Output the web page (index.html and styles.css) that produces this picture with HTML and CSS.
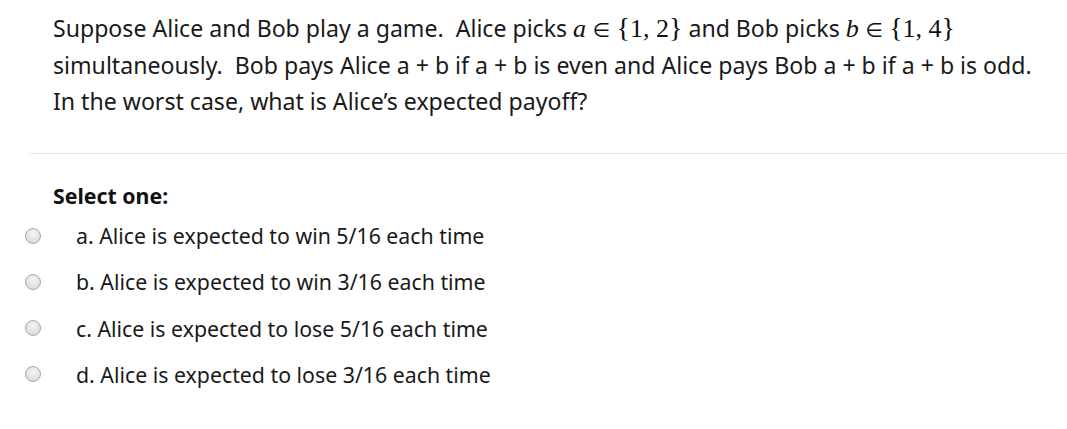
FILE: index.html
```html
<!DOCTYPE html>
<html>
<head>
<meta charset="utf-8">
<link rel="stylesheet" href="styles.css">
</head>
<body>
<div class="question">
  <p class="qtext">Suppose Alice and Bob play a game.&nbsp; Alice picks <span class="math"><i class="mi">a</i> <span class="rel">∈</span> <span class="br">{</span>1, 2<span class="br">}</span></span> and Bob picks <span class="math"><i class="mi">b</i> <span class="rel">∈</span> <span class="br">{</span>1, 4<span class="br">}</span></span><br>simultaneously.&nbsp; Bob pays Alice a + b if a + b is even and Alice pays Bob a + b if a + b is odd.<br>In the worst case, what is Alice’s expected payoff?</p>
</div>
<hr class="divider">
<div class="answers">
  <div class="prompt">Select one:</div>
  <ul class="options">
    <li class="option"><span class="radio"></span><span class="label">a. Alice is expected to win 5/16 each time</span></li>
    <li class="option"><span class="radio"></span><span class="label">b. Alice is expected to win 3/16 each time</span></li>
    <li class="option"><span class="radio"></span><span class="label">c. Alice is expected to lose 5/16 each time</span></li>
    <li class="option"><span class="radio"></span><span class="label">d. Alice is expected to lose 3/16 each time</span></li>
  </ul>
</div>
</body>
</html>
```
FILE: styles.css
```css
html, body {
  margin: 0;
  padding: 0;
  background: #ffffff;
}
body {
  font-family: "Noto Sans", "Open Sans", sans-serif;
  font-size: 21.3px;
  color: #1a1a1a;
}
.question {
  padding: 10px 0 0 53px;
}
.qtext {
  margin: 0;
  font-size: 23.1px;
  line-height: 36.5px;
}
.math {
  font-family: "Liberation Serif", "DejaVu Serif", serif;
  font-size: 26px;
  line-height: 20px;
  color: #111;
}
.mi {
  font-style: italic;
  font-size: 26px;
}
.rel {
  font-family: "DejaVu Sans", sans-serif;
  font-size: 20px;
}
.br {
  font-size: 28px;
}
.divider {
  border: 0;
  height: 1px;
  background: #e3e8ed;
  margin: 33px 0 0 29px;
}
.answers {
  padding-top: 27px;
}
.prompt {
  font-weight: 700;
  padding-left: 53px;
  line-height: 30px;
  color: #111;
}
.options {
  list-style: none;
  margin: 10px 0 0 0;
  padding: 0;
  display: flex;
  flex-direction: column;
  gap: 16.3px;
}
.option {
  display: flex;
  align-items: center;
  height: 30px;
  padding-left: 25px;
}
.radio {
  width: 16px;
  height: 16px;
  border-radius: 50%;
  box-sizing: border-box;
  border: 1px solid #a9a9a9;
  background: radial-gradient(circle at 50% 35%, #f4f4f4 0%, #e2e2e2 60%, #d4d4d4 100%);
  flex: none;
}
.label {
  margin-left: 35px;
}
```
